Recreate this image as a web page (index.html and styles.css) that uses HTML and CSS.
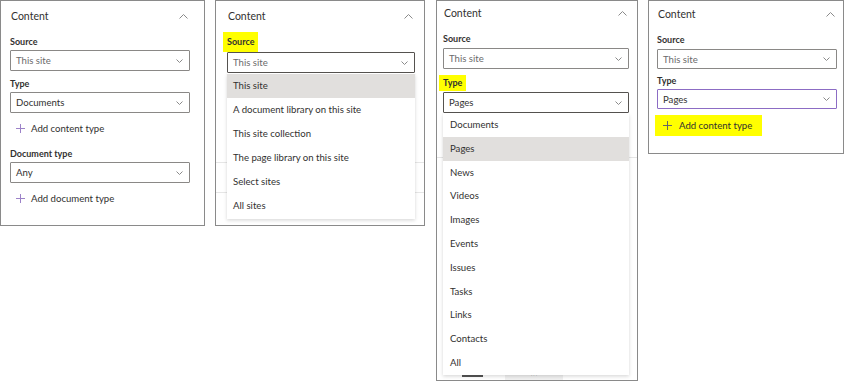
FILE: index.html
```html
<!DOCTYPE html>
<html>
<head>
<meta charset="utf-8">
<link rel="stylesheet" href="styles.css">
</head>
<body>
<div class="page">

  <section class="panel p1">
    <div class="head"><span class="title">Content</span><svg class="chev-up" width="9" height="5" viewBox="0 0 9 5"><polyline points="0.5,4.5 4.5,0.5 8.5,4.5"/></svg></div>
    <div class="label">Source</div>
    <div class="dd"><span class="val muted">This site</span><svg class="chev-down" width="7" height="4" viewBox="0 0 7 4"><polyline points="0.5,0.5 3.5,3.5 6.5,0.5"/></svg></div>
    <div class="label">Type</div>
    <div class="dd"><span class="val">Documents</span><svg class="chev-down" width="7" height="4" viewBox="0 0 7 4"><polyline points="0.5,0.5 3.5,3.5 6.5,0.5"/></svg></div>
    <div class="add"><svg class="plus" width="9" height="9" viewBox="0 0 9 9"><path d="M4.5 0V9M0 4.5H9"/></svg>Add content type</div>
    <div class="label after-add">Document type</div>
    <div class="dd"><span class="val">Any</span><svg class="chev-down" width="7" height="4" viewBox="0 0 7 4"><polyline points="0.5,0.5 3.5,3.5 6.5,0.5"/></svg></div>
    <div class="add"><svg class="plus" width="9" height="9" viewBox="0 0 9 9"><path d="M4.5 0V9M0 4.5H9"/></svg>Add document type</div>
  </section>

  <section class="panel p2">
    <div class="head"><span class="title">Content</span><svg class="chev-up" width="9" height="5" viewBox="0 0 9 5"><polyline points="0.5,4.5 4.5,0.5 8.5,4.5"/></svg></div>
    <div class="label hl">Source</div>
    <div class="dd-wrap">
      <div class="dd open"><span class="val muted">This site</span><svg class="chev-down" width="7" height="4" viewBox="0 0 7 4"><polyline points="0.5,0.5 3.5,3.5 6.5,0.5"/></svg></div>
      <ul class="menu">
        <li class="sel">This site</li>
        <li>A document library on this site</li>
        <li>This site collection</li>
        <li>The page library on this site</li>
        <li>Select sites</li>
        <li>All sites</li>
      </ul>
    </div>
    <div class="sep sep-a"></div>
    <div class="sep sep-b"></div>
  </section>

  <section class="panel p3">
    <div class="head"><span class="title">Content</span><svg class="chev-up" width="9" height="5" viewBox="0 0 9 5"><polyline points="0.5,4.5 4.5,0.5 8.5,4.5"/></svg></div>
    <div class="label">Source</div>
    <div class="dd"><span class="val muted">This site</span><svg class="chev-down" width="7" height="4" viewBox="0 0 7 4"><polyline points="0.5,0.5 3.5,3.5 6.5,0.5"/></svg></div>
    <div class="label hl">Type</div>
    <div class="dd-wrap">
      <div class="dd open"><span class="val">Pages</span><svg class="chev-down" width="7" height="4" viewBox="0 0 7 4"><polyline points="0.5,0.5 3.5,3.5 6.5,0.5"/></svg></div>
      <ul class="menu">
        <li>Documents</li>
        <li class="sel">Pages</li>
        <li>News</li>
        <li>Videos</li>
        <li>Images</li>
        <li>Events</li>
        <li>Issues</li>
        <li>Tasks</li>
        <li>Links</li>
        <li>Contacts</li>
        <li>All</li>
      </ul>
    </div>
    <div class="sep sep-c"></div>
    <div class="tools"><span class="t1"></span><span class="t2">···</span></div>
  </section>

  <section class="panel p4">
    <div class="head"><span class="title">Content</span><svg class="chev-up" width="9" height="5" viewBox="0 0 9 5"><polyline points="0.5,4.5 4.5,0.5 8.5,4.5"/></svg></div>
    <div class="label">Source</div>
    <div class="dd"><span class="val muted">This site</span><svg class="chev-down" width="7" height="4" viewBox="0 0 7 4"><polyline points="0.5,0.5 3.5,3.5 6.5,0.5"/></svg></div>
    <div class="label">Type</div>
    <div class="dd focus"><span class="val">Pages</span><svg class="chev-down" width="7" height="4" viewBox="0 0 7 4"><polyline points="0.5,0.5 3.5,3.5 6.5,0.5"/></svg></div>
    <div class="add hl-add"><svg class="plus" width="9" height="9" viewBox="0 0 9 9"><path d="M4.5 0V9M0 4.5H9"/></svg>Add content type</div>
  </section>

</div>
</body>
</html>
```

FILE: styles.css
```css
* { box-sizing: border-box; }
html, body { margin: 0; padding: 0; background: #fff; }
body {
  font-family: Lato, "Open Sans", "Liberation Sans", sans-serif;
  color: #323130;
  font-size: 9.6px;
}
.page {
  display: flex;
  align-items: flex-start;
  width: 850px;
  height: 381px;
}
.panel {
  border: 1px solid #8a8a8a;
  display: flex;
  flex-direction: column;
  background: #fff;
  position: relative;
}
.head {
  display: flex;
  align-items: center;
  justify-content: space-between;
  height: 30px;
}
.title { font-size: 10.5px; color: #323130; padding-left: 1px; }
.chev-up { margin-right: 2px; fill: none; stroke: #8a8a8a; stroke-width: 1; }
.chev-down { fill: none; stroke: #8a8a8a; stroke-width: 1; }
.label {
  font-size: 9px;
  font-weight: 700;
  line-height: 14px;
  margin-top: 6px;
  margin-bottom: 1px;
}
.dd {
  height: 21px;
  border: 1px solid #8a8886;
  border-radius: 1px;
  display: flex;
  align-items: center;
  justify-content: space-between;
  padding: 0 6px 0 5px;
  background: #fff;
}
.val { color: #323130; }
.val.muted { color: #6b6b6b; }
.dd.open { border-color: #55524f; }
.dd.focus { border-color: #8c6cc4; }
.add {
  display: flex;
  align-items: center;
  gap: 6px;
  height: 20px;
  margin-top: 5px;
  padding-left: 6px;
  color: #323130;
}
.plus { fill: none; stroke: #9c82c8; stroke-width: 1; }
.label.after-add { margin-top: 9px; }

/* panel 1 */
.p1 { width: 205px; height: 226px; padding: 0 14px 0 9px; }
.p1 .head + .label { margin-top: 4px; }

/* panel 2 */
.p2 { width: 210px; height: 226px; padding: 0 9px 0 11px; margin-left: 10px; }
.hl {
  background: #ffff00;
  width: fit-content;
  padding: 3px 4px;
  margin-left: -4px;
  margin-bottom: 0;
}
.p2 .head + .hl { margin-top: 1px; }
.dd-wrap { position: relative; }
.menu {
  list-style: none;
  margin: 0;
  padding: 1px 0;
  position: absolute;
  top: 100%;
  left: 0;
  right: 0;
  background: #fff;
  z-index: 2;
  box-shadow: 0 1.6px 3.6px rgba(0,0,0,0.16), 0 0.3px 0.9px rgba(0,0,0,0.12);
}
.menu li {
  height: 24px;
  line-height: 24px;
  padding-left: 6px;
  color: #323130;
  white-space: nowrap;
}
.menu li.sel { background: #e1dfdd; }
.sep { border-top: 1px solid #e6e6e6; }
.p2 .sep { margin-left: -11px; margin-right: -9px; }
.sep-a { margin-top: 89px; }
.sep-b { margin-top: 29px; }

/* panel 3 */
.p3 { width: 202px; height: 381px; padding: 0 8px 0 6px; margin-left: 11px; }
.p3 .head { height: 24px; }
.p3 .head + .label { margin-top: 7px; margin-bottom: 2px; }
.p3 .hl { padding: 1px 4px; margin-top: 6px; margin-bottom: 1px; }
.p3 .menu { padding: 0; }
.p3 .menu li { height: 23.8px; line-height: 23.8px; padding-left: 7px; }
.p3 .sep { margin: 44px -8px 0 -6px; }
.tools {
  margin-top: auto;
  height: 12px;
  display: flex;
  align-items: flex-end;
  padding-left: 19px;
  gap: 22px;
}
.t1 { width: 21px; height: 2px; background: #555; margin-bottom: 3px; }
.t2 {
  width: 58px;
  height: 12px;
  background: #f0f0f0;
  font-size: 9px;
  line-height: 12px;
  text-align: center;
  color: #555;
}

/* panel 4 */
.p4 { width: 196px; height: 154px; padding: 0 6px 0 8px; margin-left: 10px; }
.p4 .head { height: 26px; }
.p4 .label { margin-top: 6px; margin-bottom: 2px; }
.p4 .dd + .label { margin-top: 5px; margin-bottom: 1px; }
.p4 .dd { height: 20px; }
.hl-add {
  background: #ffff00;
  width: fit-content;
  height: 21px;
  margin-left: -2px;
  margin-top: 6px;
  padding: 0 10px 0 8px;
  gap: 7px;
}
.hl-add .plus { stroke: #666; }
```
